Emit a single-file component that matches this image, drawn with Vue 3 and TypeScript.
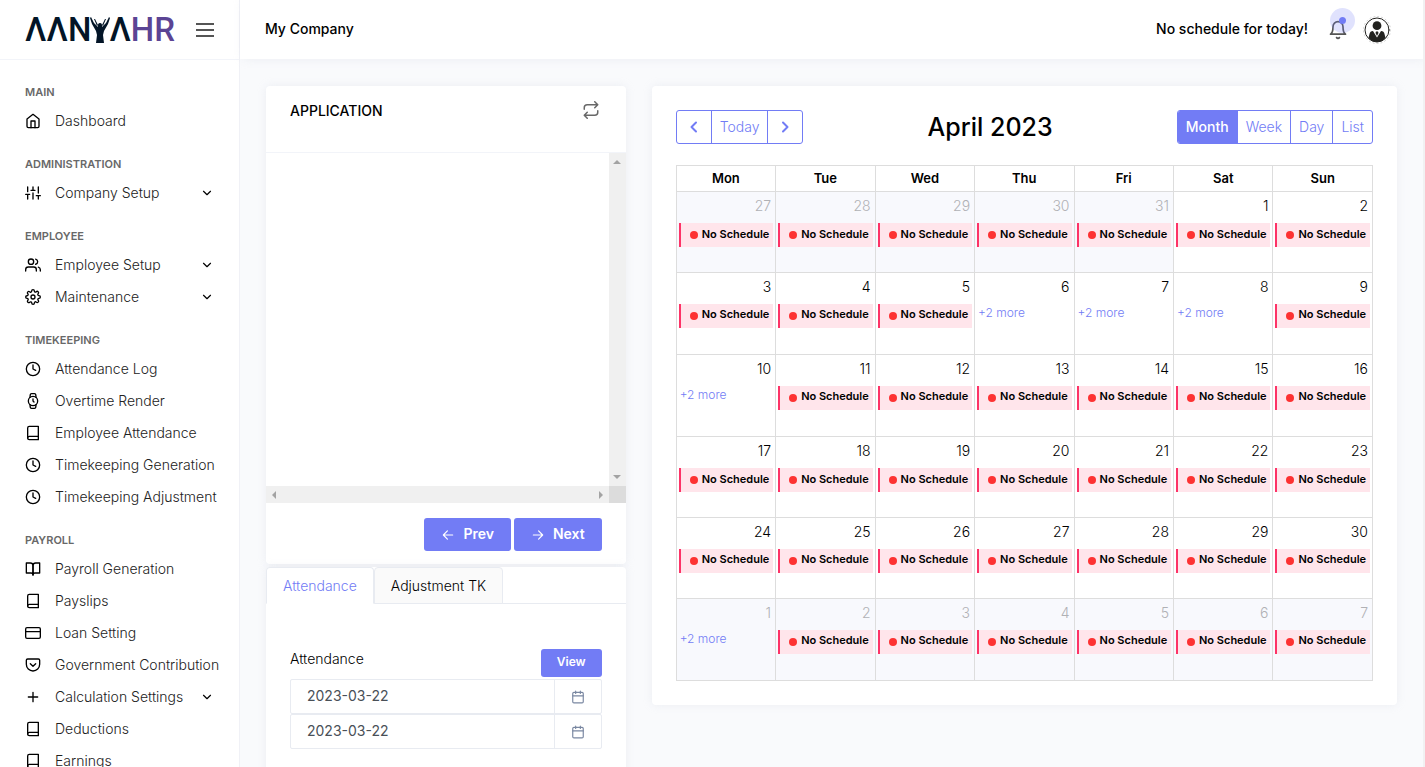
<script setup lang="ts">
import { ref } from 'vue'

interface MenuItem { label: string; icon: string; expandable?: boolean }
interface MenuGroup { title: string; items: MenuItem[] }
interface Day { num: number; muted: boolean; more: boolean }

const icons: Record<string, string[]> = {
  home: ['M3 9l9-7 9 7v11a2 2 0 0 1-2 2H5a2 2 0 0 1-2-2z', 'M9 22V12h6v10'],
  sliders: ['M4 21v-7M4 10V3M12 21v-9M12 8V3M20 21v-5M20 12V3M1 14h6M9 8h6M17 16h6'],
  users: ['M17 21v-2a4 4 0 0 0-4-4H5a4 4 0 0 0-4 4v2', 'M13 7a4 4 0 1 1-8 0a4 4 0 0 1 8 0', 'M23 21v-2a4 4 0 0 0-3-3.87', 'M16 3.13a4 4 0 0 1 0 7.75'],
  settings: ['M15 12a3 3 0 1 1-6 0a3 3 0 0 1 6 0', 'M19.4 15a1.65 1.65 0 0 0 .33 1.82l.06.06a2 2 0 0 1-2.83 2.83l-.06-.06a1.65 1.65 0 0 0-2.8 1.17V21a2 2 0 0 1-4 0v-.09A1.65 1.65 0 0 0 9 19.4a1.65 1.65 0 0 0-1.82.33l-.06.06a2 2 0 0 1-2.83-2.83l.06-.06a1.65 1.65 0 0 0-1.17-2.8H3a2 2 0 0 1 0-4h.09A1.65 1.65 0 0 0 4.6 9a1.65 1.65 0 0 0-.33-1.82l-.06-.06a2 2 0 0 1 2.83-2.83l.06.06A1.65 1.65 0 0 0 9 4.68a1.65 1.65 0 0 0 1-1.51V3a2 2 0 0 1 4 0v.09a1.65 1.65 0 0 0 2.82 1.17l.06-.06a2 2 0 0 1 2.83 2.83l-.06.06A1.65 1.65 0 0 0 19.4 9a1.65 1.65 0 0 0 1.51 1H21a2 2 0 0 1 0 4h-.09a1.65 1.65 0 0 0-1.51 1z'],
  clock: ['M22 12a10 10 0 1 1-20 0a10 10 0 0 1 20 0', 'M12 6v6l4 2'],
  watch: ['M19 12a7 7 0 1 1-14 0a7 7 0 0 1 14 0', 'M12 9v3l1.5 1.5', 'M16.51 17.35l-.35 3.83a2 2 0 0 1-2 1.82H9.83a2 2 0 0 1-2-1.82l-.35-3.83m.01-10.7l.35-3.83A2 2 0 0 1 9.83 1h4.35a2 2 0 0 1 2 1.82l.35 3.83'],
  book: ['M4 19.5A2.5 2.5 0 0 1 6.5 17H20', 'M6.5 2H20v20H6.5A2.5 2.5 0 0 1 4 19.5v-15A2.5 2.5 0 0 1 6.5 2z'],
  bookOpen: ['M2 3h6a4 4 0 0 1 4 4v14a3 3 0 0 0-3-3H2z', 'M22 3h-6a4 4 0 0 0-4 4v14a3 3 0 0 1 3-3h7z'],
  card: ['M3 4h18a2 2 0 0 1 2 2v12a2 2 0 0 1-2 2H3a2 2 0 0 1-2-2V6a2 2 0 0 1 2-2z', 'M1 10h22'],
  pocket: ['M4 3h16a2 2 0 0 1 2 2v6a10 10 0 0 1-20 0V5a2 2 0 0 1 2-2z', 'M8 10l4 4 4-4'],
  plus: ['M12 5v14M5 12h14'],
  calendar: ['M5 4h14a2 2 0 0 1 2 2v14a2 2 0 0 1-2 2H5a2 2 0 0 1-2-2V6a2 2 0 0 1 2-2z', 'M16 2v4M8 2v4M3 10h18'],
}

const menu: MenuGroup[] = [
  { title: 'MAIN', items: [{ label: 'Dashboard', icon: 'home' }] },
  { title: 'ADMINISTRATION', items: [{ label: 'Company Setup', icon: 'sliders', expandable: true }] },
  {
    title: 'EMPLOYEE',
    items: [
      { label: 'Employee Setup', icon: 'users', expandable: true },
      { label: 'Maintenance', icon: 'settings', expandable: true },
    ],
  },
  {
    title: 'TIMEKEEPING',
    items: [
      { label: 'Attendance Log', icon: 'clock' },
      { label: 'Overtime Render', icon: 'watch' },
      { label: 'Employee Attendance', icon: 'book' },
      { label: 'Timekeeping Generation', icon: 'clock' },
      { label: 'Timekeeping Adjustment', icon: 'clock' },
    ],
  },
  {
    title: 'PAYROLL',
    items: [
      { label: 'Payroll Generation', icon: 'bookOpen' },
      { label: 'Payslips', icon: 'book' },
      { label: 'Loan Setting', icon: 'card' },
      { label: 'Government Contribution', icon: 'pocket' },
      { label: 'Calculation Settings', icon: 'plus', expandable: true },
      { label: 'Deductions', icon: 'book' },
      { label: 'Earnings', icon: 'book' },
    ],
  },
]

const weekdays = ['Mon', 'Tue', 'Wed', 'Thu', 'Fri', 'Sat', 'Sun']
const views = ['Month', 'Week', 'Day', 'List']
const activeView = ref('Month')
const activeTab = ref('Attendance')
const dateFrom = ref('2023-03-22')
const dateTo = ref('2023-03-22')

// The grid starts on Monday 27 March and spans six weeks.
const collapsed = [10, 11, 12, 14, 35]
const weeks: Day[][] = Array.from({ length: 6 }, (_, w) =>
  Array.from({ length: 7 }, (_, d) => {
    const i = w * 7 + d
    const num = i < 5 ? 27 + i : i < 35 ? i - 4 : i - 34
    return { num, muted: i < 5 || i >= 35, more: collapsed.includes(i) }
  }),
)
</script>

<template>
  <div class="app">
    <aside class="sidebar">
      <div class="brand-bar">
        <a href="#" class="brand" aria-label="AANYAHR">
          <span>ΛΛN</span>
          <svg class="figure" viewBox="0 0 20 26" aria-hidden="true">
            <path d="M0 1L1 0L4 6L8 10Q7.500 6 10 6Q12.500 6 12 10L16 6L19 0L20 1L18 7L14 14L13 18L14 26H6L7 18L6 14L2 7Z" />
            <path d="M4 2L5 2L8 8L7 9ZM16 2L15 2L12 8L13 9Z" />
          </svg>
          <span>Λ</span><span class="hr">HR</span>
        </a>
        <button class="burger" aria-label="Toggle menu"><i></i><i></i><i></i></button>
      </div>
      <nav class="menu">
        <section v-for="group in menu" :key="group.title">
          <h6>{{ group.title }}</h6>
          <a v-for="item in group.items" :key="item.label" href="#" class="menu-item">
            <svg class="icon" viewBox="0 0 24 24"><path v-for="d in icons[item.icon]" :key="d" :d="d" /></svg>
            <span>{{ item.label }}</span>
            <svg v-if="item.expandable" class="chevron" viewBox="0 0 24 24"><path d="M6 9l6 6 6-6" /></svg>
          </a>
        </section>
      </nav>
    </aside>

    <div class="page">
      <header class="topbar">
        <span class="company">My Company</span>
        <span class="notice">No schedule for today!</span>
        <button class="bell" aria-label="Notifications">
          <svg viewBox="0 0 24 24"><path d="M18 8A6 6 0 0 0 6 8c0 7-3 9-3 9h18s-3-2-3-9" /><path d="M13.73 21a2 2 0 0 1-3.46 0" /></svg>
          <i class="pulse"></i>
        </button>
        <button class="avatar" aria-label="Profile">
          <svg viewBox="0 0 28 28">
            <circle cx="14" cy="14" r="13.500" class="halo" />
            <circle cx="14" cy="14" r="12" class="ring" />
            <circle cx="14" cy="9.700" r="4.400" />
            <path d="M10 15L14 21.500L18 15Q21 15 21.500 18L22.500 22Q19 26 14 26Q9 26 5.500 22L6.500 18Q7 15 10 15Z" />
            <path d="M13 15.500H15L15.500 17L14 20L12.500 17Z" />
          </svg>
        </button>
      </header>

      <main class="content">
        <div class="left-col">
          <section class="card application">
            <div class="card-head">
              <h2>APPLICATION</h2>
              <button class="refresh" aria-label="Refresh">
                <svg viewBox="0 0 24 24"><path d="M17 1l4 4-4 4M3 11V9a4 4 0 0 1 4-4h14M7 23l-4-4 4-4M21 13v2a4 4 0 0 1-4 4H3" /></svg>
              </button>
            </div>
            <div class="scroller">
              <div class="view"></div>
              <div class="track vertical"><i class="up"></i><i class="down"></i></div>
              <div class="track horizontal"><i class="prev"></i><i class="next"></i></div>
              <div class="corner"></div>
            </div>
            <div class="pager">
              <button class="primary">
                <svg viewBox="0 0 24 24"><path d="M20 12H4M11 19l-7-7 7-7" /></svg><span>Prev</span>
              </button>
              <button class="primary">
                <svg viewBox="0 0 24 24"><path d="M4 12h16M13 5l7 7-7 7" /></svg><span>Next</span>
              </button>
            </div>
          </section>

          <section class="card attendance">
            <div class="tabs" role="tablist">
              <button v-for="tab in ['Attendance', 'Adjustment TK']" :key="tab" role="tab" :aria-selected="activeTab === tab"
                :class="{ active: activeTab === tab }" @click="activeTab = tab">{{ tab }}</button>
            </div>
            <form class="form" @submit.prevent>
              <div class="form-head">
                <label for="date-from">Attendance</label>
                <button class="primary small"><span>View</span></button>
              </div>
              <div class="date">
                <input id="date-from" v-model="dateFrom" type="text" />
                <button type="button" aria-label="Pick start date"><svg viewBox="0 0 24 24"><path v-for="d in icons.calendar" :key="d" :d="d" /></svg></button>
              </div>
              <div class="date">
                <input v-model="dateTo" type="text" aria-label="End date" />
                <button type="button" aria-label="Pick end date"><svg viewBox="0 0 24 24"><path v-for="d in icons.calendar" :key="d" :d="d" /></svg></button>
              </div>
            </form>
          </section>
        </div>

        <section class="card calendar">
          <div class="toolbar">
            <div class="group">
              <button class="arrow" aria-label="Previous month"><svg viewBox="0 0 16 16"><path d="M10 3.500L5.500 8L10 12.500" /></svg></button>
              <button>Today</button>
              <button class="arrow" aria-label="Next month"><svg viewBox="0 0 16 16"><path d="M6 3.500L10.500 8L6 12.500" /></svg></button>
            </div>
            <h1>April 2023</h1>
            <div class="group">
              <button v-for="view in views" :key="view" :class="{ active: activeView === view }" @click="activeView = view">{{ view }}</button>
            </div>
          </div>
          <table>
            <thead>
              <tr><th v-for="day in weekdays" :key="day" scope="col">{{ day }}</th></tr>
            </thead>
            <tbody>
              <tr v-for="(week, w) in weeks" :key="w">
                <td v-for="(day, d) in week" :key="d" :class="{ muted: day.muted }">
                  <div class="num">{{ day.num }}</div>
                  <a v-if="day.more" href="#" class="more">+2 more</a>
                  <div v-else class="event"><i></i><span>No Schedule</span></div>
                </td>
              </tr>
            </tbody>
          </table>
        </section>
      </main>
    </div>
  </div>
</template>

<style>
body {
  margin: 0;
  background: #f9fafb;
}
</style>

<style scoped>
* {
  box-sizing: border-box;
}
.app {
  display: flex;
  height: 100vh;
  overflow: hidden;
  border-right: 2px solid #f1f1f2;
  background: #f9fafc;
  color: #000;
  font-family: Inter, Roboto, sans-serif;
  font-size: 14px;
  line-height: 20px;
}
button {
  margin: 0;
  padding: 0;
  border: 0;
  background: none;
  color: inherit;
  font: inherit;
  cursor: pointer;
}
a {
  color: inherit;
  text-decoration: none;
}
svg {
  display: block;
  flex: none;
  fill: none;
  stroke: currentColor;
  stroke-width: 2;
  stroke-linecap: round;
  stroke-linejoin: round;
}
h1,
h2,
h6 {
  margin: 0;
}

.sidebar {
  flex: none;
  width: 240px;
  overflow: hidden;
  border-right: 1px solid #f0f1f6;
  background: #fff;
}
.brand-bar {
  display: flex;
  align-items: center;
  justify-content: space-between;
  height: 60px;
  padding: 0 25px;
  border-bottom: 1px solid #f2f4f9;
}
.brand {
  display: flex;
  align-items: center;
  color: #031527;
  font: 500 33px/36px Roboto, sans-serif;
}
.figure {
  width: 20px;
  height: 26px;
  margin: 0 -1px;
  fill: #031527;
  stroke: none;
}
.hr {
  color: #5b4494;
}
.burger {
  display: grid;
  gap: 4px;
  width: 18px;
}
.burger i {
  height: 2px;
  background: #555;
}
.menu {
  padding: 5px 25px;
}
.menu h6 {
  height: 40px;
  padding-top: 17px;
  color: #686868;
  font-size: 11px;
  font-weight: 600;
  line-height: 20px;
}
.menu-item {
  display: flex;
  align-items: center;
  height: 32px;
  color: #222;
  font-weight: 300;
  white-space: nowrap;
}
.icon {
  width: 16px;
  height: 16px;
  margin-right: 14px;
  color: #000;
}
.chevron {
  width: 14px;
  height: 14px;
  margin-left: auto;
  color: #000;
}

.page {
  display: flex;
  flex: 1;
  flex-direction: column;
  min-width: 0;
}
.topbar {
  display: flex;
  flex: none;
  align-items: center;
  height: 59px;
  padding: 0 32px 0 25px;
  background: #fff;
  box-shadow: 3px 0 10px 0 rgba(183, 192, 206, 0.2);
  font-weight: 500;
}
.company,
.notice {
  padding-bottom: 2px;
}
.company {
  margin-right: auto;
}
.bell {
  position: relative;
  margin: 0 15px 0 20px;
  color: #555;
}
.bell svg {
  width: 20px;
  height: 20px;
  stroke-width: 2;
}
.pulse {
  position: absolute;
  top: -12px;
  right: -7px;
  width: 25px;
  height: 25px;
  border: 9px solid rgba(114, 124, 245, 0.22);
  border-radius: 50%;
  background: #727cf5;
  background-clip: padding-box;
}
.avatar svg {
  width: 28px;
  height: 28px;
  fill: #22221f;
  stroke: none;
}
.avatar .halo {
  fill: none;
  stroke: #ccc;
  stroke-width: 1;
  stroke-dasharray: 1 3;
}
.avatar .ring {
  fill: #fff;
  stroke: #22221f;
  stroke-width: 1;
}

.content {
  display: grid;
  flex: 1;
  grid-template-columns: repeat(12, minmax(0, 1fr));
  gap: 26px;
  align-items: start;
  min-height: 0;
  padding: 27px 26px;
}
.left-col {
  display: grid;
  grid-column: span 4;
  gap: 3px;
}
.card {
  border-radius: 4px;
  background: #fff;
  box-shadow: 0 0 10px 0 rgba(183, 192, 206, 0.2);
}
.card-head {
  display: flex;
  align-items: flex-start;
  justify-content: space-between;
  height: 67px;
  padding: 15px 26px 0 24px;
  border-bottom: 1px solid #f2f4f9;
}
.card-head h2 {
  font-size: 14px;
  font-weight: 500;
}
.refresh {
  color: #686868;
}
.refresh svg {
  width: 18px;
  height: 18px;
}
.scroller {
  display: grid;
  grid-template: 333px 17px / 1fr 17px;
}
.track {
  display: flex;
  justify-content: space-between;
  background: #f0f0f0;
}
.vertical {
  flex-direction: column;
  align-items: center;
  padding: 7px 0;
}
.horizontal {
  align-items: center;
  padding: 0 6px;
}
.track i {
  border: 4px solid transparent;
}
.track .up {
  border-top: 0;
  border-bottom-color: #a3a3a3;
}
.track .down {
  border-bottom: 0;
  border-top-color: #a3a3a3;
}
.track .prev {
  border-left: 0;
  border-right-color: #a3a3a3;
}
.track .next {
  border-right: 0;
  border-left-color: #a3a3a3;
}
.corner {
  background: #dcdcdc;
}
.pager {
  display: flex;
  gap: 3px;
  justify-content: flex-end;
  padding: 15px 24px 13px;
}
.primary {
  display: flex;
  align-items: center;
  height: 33px;
  padding: 0 17px;
  border-radius: 3px;
  background: #727cf5;
  color: #fff;
  font-weight: 600;
}
.primary span {
  padding-bottom: 2px;
}
.primary svg {
  width: 14px;
  height: 14px;
  margin-right: 8px;
}
.primary.small {
  height: 28px;
  padding: 0 16px;
  font-size: 12px;
}

.tabs {
  display: flex;
  border-bottom: 1px solid #e8ebf1;
}
.tabs button {
  height: 37px;
  margin-bottom: -1px;
  padding: 0 16px;
  border: 1px solid #e8ebf1;
  border-radius: 4px 4px 0 0;
  background: #fafafa;
  font-weight: 300;
}
.tabs .active {
  border-bottom-color: #fff;
  background: #fff;
  color: #727cf5;
}
.form {
  padding: 45px 24px 40px;
}
.form-head {
  display: flex;
  justify-content: space-between;
  margin-bottom: 2px;
  font-weight: 300;
}
.date {
  display: flex;
  height: 35px;
  border: 1px solid #e8ebf1;
  border-radius: 2px;
}
.date input {
  flex: 1;
  min-width: 0;
  padding: 0 16px 2px;
  border: 0;
  outline: 0;
  background: none;
  color: #495057;
  font: inherit;
}
.date button {
  display: grid;
  flex: none;
  place-items: center;
  width: 47px;
  border-left: 1px solid #e8ebf1;
  color: #7987a1;
}
.date svg {
  width: 14px;
  height: 14px;
}

.calendar {
  grid-column: span 8;
  padding: 24px;
}
.toolbar {
  display: flex;
  align-items: center;
  justify-content: space-between;
  margin-bottom: 21px;
}
.toolbar h1 {
  font-size: 25px;
  font-weight: 500;
  line-height: 34px;
}
.group {
  display: flex;
  overflow: hidden;
  border: 1px solid #727cf5;
  border-radius: 3px;
}
.group button {
  height: 32px;
  padding: 0 8px;
  color: #727cf5;
  font-weight: 300;
}
.group button + button {
  border-left: 1px solid #727cf5;
}
.group .active {
  background: #727cf5;
  color: #fff;
  font-weight: 500;
}
.group .arrow {
  padding: 0 9px;
}
.arrow svg {
  width: 16px;
  height: 16px;
}
table {
  width: 100%;
  height: 516px;
  border-collapse: collapse;
  table-layout: fixed;
}
th,
td {
  padding: 0;
  border: 1px solid #ddd;
}
th {
  height: 26px;
  padding-bottom: 2px;
  font-size: 13px;
  font-weight: 600;
}
td {
  vertical-align: top;
}
.muted {
  background: #f8f9fd;
}
.num {
  padding: 4px 4px 0 0;
  font-weight: 300;
  text-align: right;
}
.muted .num {
  color: #b0b1b5;
}
.event {
  display: flex;
  align-items: center;
  height: 24px;
  margin: 7px 2px 0;
  border-left: 2px solid #fd3367;
  background: #ffe5eb;
  font-size: 11px;
  font-weight: 600;
  white-space: nowrap;
}
.event span {
  padding-bottom: 3px;
}
.event i {
  flex: none;
  width: 8px;
  height: 8px;
  margin: 0 4px 0 9px;
  border-radius: 50%;
  background: #fd3232;
}
.more {
  display: block;
  padding: 6px 3px;
  color: #727cf5;
  font-size: 12px;
  font-weight: 300;
}
</style>
